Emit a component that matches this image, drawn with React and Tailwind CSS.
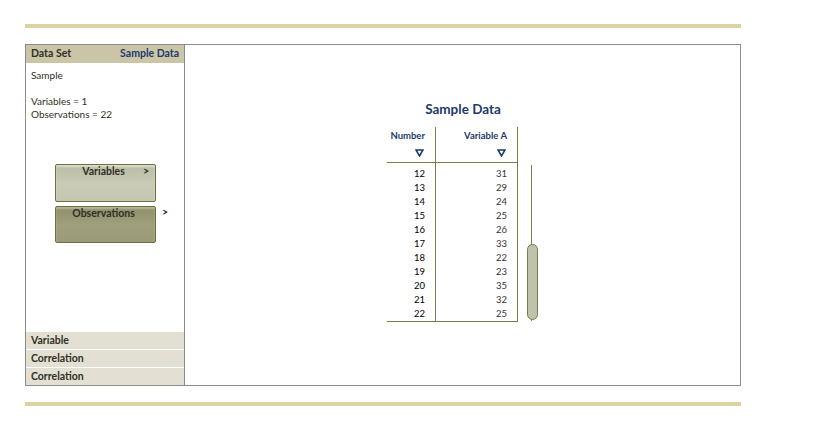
const rows = [
  [12, 31],
  [13, 29],
  [14, 24],
  [15, 25],
  [16, 26],
  [17, 33],
  [18, 22],
  [19, 23],
  [20, 35],
  [21, 32],
  [22, 25],
];

function SortArrow() {
  return (
    <svg width="9" height="8" viewBox="0 0 9 8" className="block">
      <path d="M1 1 H8 L4.5 7 Z" fill="none" stroke="#1b3a6b" strokeWidth="1.6" strokeLinejoin="miter" />
    </svg>
  );
}

function NavButton({ label, dark, outside }) {
  return (
    <div className="flex items-start">
      <div
        className={
          dark
            ? "relative w-[101px] h-[37px] border border-[#6e6f3f] rounded-[2px] bg-gradient-to-b from-[#8e8e6a] via-[#a09f7d] to-[#9c9b79] shadow-[inset_0_2px_2px_rgba(255,255,255,0.35)]"
            : "relative w-[101px] h-[38px] border border-[#6e6f3f] rounded-[2px] bg-gradient-to-b from-[#b9bba4] via-[#cacbb7] to-[#c5c7b1] shadow-[inset_0_2px_2px_rgba(255,255,255,0.5)]"
        }
      >
        <div className="pr-[4px] text-center text-[10.5px] leading-[12px] font-bold text-[#2f2f24]">{label}</div>
        {!outside && (
          <span className="absolute right-[6px] top-0 text-[10.5px] leading-[12px] font-bold text-[#2f2f24]">&gt;</span>
        )}
      </div>
      {outside && <span className="ml-[6px] text-[10.5px] leading-[12px] font-bold text-[#2f2f24]">&gt;</span>}
    </div>
  );
}

export default function App() {
  return (
    <div
      className="w-[819px] h-[430px] bg-white pt-[24px] px-[25px] overflow-hidden"
      style={{ fontFamily: "Lato, 'Open Sans', sans-serif" }}
    >
      {/* top rule */}
      <div className="w-[716px] h-[4px] bg-[#dcd3a2]" />

      {/* main frame */}
      <div className="mt-[16px] w-[716px] h-[342px] border border-[#8c8c8c] flex">
        {/* left panel */}
        <div className="w-[159px] border-r border-[#8c8c8c] flex flex-col">
          <div className="h-[18px] bg-[#cbc5a7] flex items-center justify-between px-[5px] text-[10.5px] font-bold">
            <span className="text-[#2f2f24]">Data Set</span>
            <span className="text-[#1b3a6b]">Sample Data</span>
          </div>
          <div className="px-[5px] pt-[6px] text-[10px] leading-[13px] text-[#2f2f24]">
            <div>Sample</div>
            <div className="mt-[13px]">Variables = 1</div>
            <div>Observations = 22</div>
          </div>
          <div className="ml-[29px] mt-[43px] flex flex-col gap-[4px]">
            <NavButton label="Variables" />
            <NavButton label="Observations" dark outside />
          </div>
          <div className="mt-auto text-[10.5px] font-bold text-[#2f2f24]">
            <div className="h-[18px] border-t border-white bg-[#e3e0d3] px-[5px] flex items-center">Variable</div>
            <div className="h-[18px] border-t border-white bg-[#e3e0d3] px-[5px] flex items-center">Correlation</div>
            <div className="h-[18px] border-t border-white bg-[#e3e0d3] px-[5px] flex items-center">Correlation</div>
          </div>
        </div>

        {/* content */}
        <div className="flex-1 flex flex-col items-center pt-[55px]">
          <div className="text-[13.5px] leading-[18px] font-bold text-[#1b3a6b] pl-[1px]">Sample Data</div>
          <div className="mt-[9px] flex items-start">
            <div className="w-[131px] border-r border-[#7b7b4b]">
              <div className="h-[36px] flex border-b border-[#7b7b4b] text-[9.5px] font-bold text-[#1b3a6b]">
                <div className="w-[49px] border-r border-[#7b7b4b] pr-[10px] pt-[3px] flex flex-col items-end">
                  <span className="leading-[12px]">Number</span>
                  <span className="mt-[7px] mr-[1px]"><SortArrow /></span>
                </div>
                <div className="flex-1 pr-[10px] pt-[3px] flex flex-col items-end">
                  <span className="leading-[12px]">Variable A</span>
                  <span className="mt-[7px] mr-[1px]"><SortArrow /></span>
                </div>
              </div>
              <div className="flex border-b border-[#7b7b4b] text-[9.5px] leading-[14px]">
                <div className="w-[49px] border-r border-[#7b7b4b] pr-[10px] pt-[4px] text-right text-black">
                  {rows.map((r) => (
                    <div key={r[0]}>{r[0]}</div>
                  ))}
                </div>
                <div className="flex-1 pr-[10px] pt-[4px] text-right text-[#333]">
                  {rows.map((r) => (
                    <div key={r[0]}>{r[1]}</div>
                  ))}
                </div>
              </div>
            </div>
            {/* scrollbar */}
            <div className="relative ml-[9px] mt-[38px] w-[11px] h-[156px]">
              <div className="absolute left-[4px] top-0 bottom-0 w-[1px] bg-[#7b7b4b]" />
              <div className="absolute left-0 bottom-[1px] w-[11px] h-[76px] rounded-full border border-[#7b7b4b] bg-[#c0c3ab]" />
            </div>
          </div>
        </div>
      </div>

      {/* bottom rule */}
      <div className="mt-[16px] w-[716px] h-[4px] bg-[#dcd3a2]" />
    </div>
  );
}
